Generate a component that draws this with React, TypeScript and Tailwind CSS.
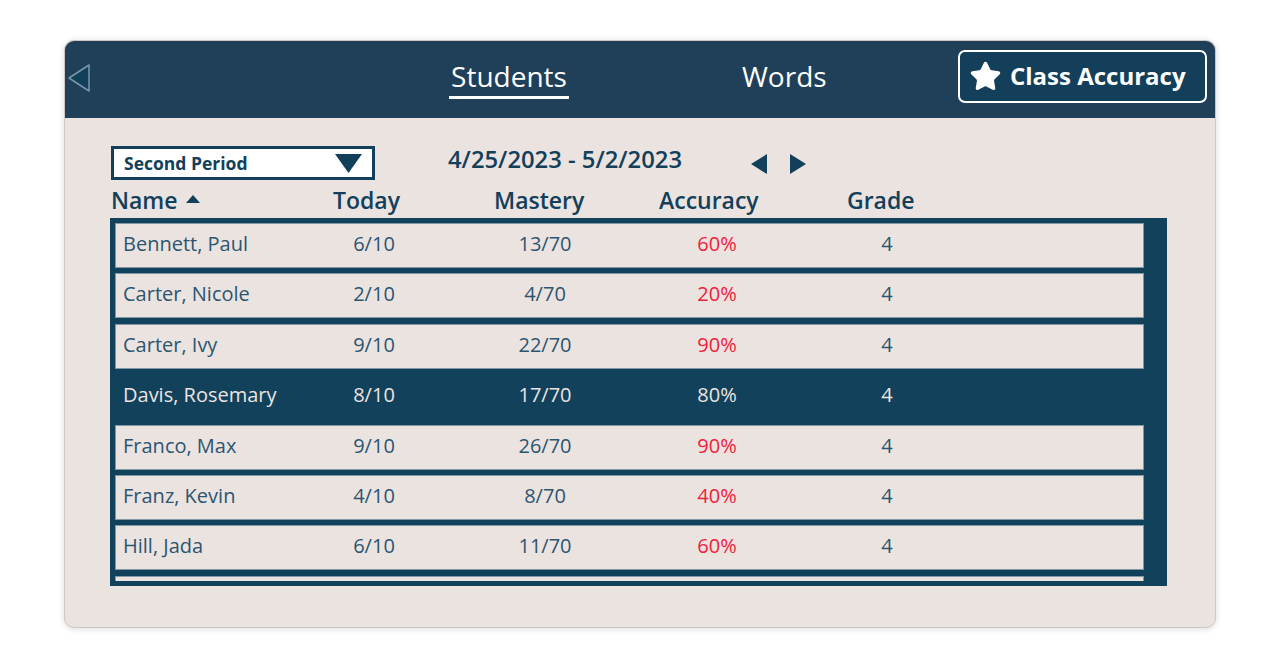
import { Star } from 'lucide-react'

type Row = {
  name: string
  today: string
  mastery: string
  accuracy: string
  grade: string
  selected?: boolean
}

const rows: Row[] = [
  { name: 'Bennett, Paul', today: '6/10', mastery: '13/70', accuracy: '60%', grade: '4' },
  { name: 'Carter, Nicole', today: '2/10', mastery: '4/70', accuracy: '20%', grade: '4' },
  { name: 'Carter, Ivy', today: '9/10', mastery: '22/70', accuracy: '90%', grade: '4' },
  { name: 'Davis, Rosemary', today: '8/10', mastery: '17/70', accuracy: '80%', grade: '4', selected: true },
  { name: 'Franco, Max', today: '9/10', mastery: '26/70', accuracy: '90%', grade: '4' },
  { name: 'Franz, Kevin', today: '4/10', mastery: '8/70', accuracy: '40%', grade: '4' },
  { name: 'Hill, Jada', today: '6/10', mastery: '11/70', accuracy: '60%', grade: '4' },
]

function StudentRow({ r }: { r: Row }) {
  const base = r.selected
    ? 'bg-[#12415b] text-[#ece4e1] px-px'
    : 'bg-[#ebe3e0] text-[#2c5570] border border-[#8197a4]'
  return (
    <div className={`flex h-[45px] shrink-0 items-center pb-[3px] text-[20px] ${base}`}>
      <div className="w-[200px] pl-[7px]">{r.name}</div>
      <div className="w-[116px] text-center">{r.today}</div>
      <div className="w-[226px] text-center">{r.mastery}</div>
      <div className={`w-[118px] text-center ${r.selected ? '' : 'text-[#f0213a]'}`}>{r.accuracy}</div>
      <div className="w-[222px] text-center">{r.grade}</div>
    </div>
  )
}

export default function App() {
  return (
    <div className="min-h-[668px] bg-white pl-[64px] pt-[40px]" style={{ fontFamily: '"Open Sans", sans-serif' }}>
      <div className="h-[588px] w-[1152px] overflow-hidden rounded-[10px] border border-[#cdc6c3] bg-[#ebe3e0] shadow-[0_1px_6px_rgba(0,0,0,0.15)]">
        {/* Header */}
        <div className="flex h-[77px] items-center bg-[#203f58] text-white">
          <svg width="24" height="30" viewBox="0 0 24 30" className="ml-[2px] mb-[3px]">
            <polygon points="2,15 22,2 22,28" fill="#12405a" stroke="#7896aa" strokeWidth="1.5" strokeLinejoin="round" />
          </svg>
          <div className="ml-[358px] flex flex-col items-center pb-[2px]">
            <span className="text-[28px] leading-[34px]">Students</span>
            <span className="mt-[3px] h-[3px] w-[120px] bg-white" />
          </div>
          <div className="ml-[173px] pb-[8px] text-[28px] leading-[34px]">Words</div>
          <button className="mb-[7px] ml-auto mr-[8px] flex h-[53px] w-[249px] items-center rounded-[7px] border-2 border-white bg-[#133f5a] pl-[9px]">
            <Star size={33} fill="white" strokeWidth={1.5} strokeLinejoin="round" className="text-white" />
            <span className="ml-[8px] text-[24px] font-bold">Class Accuracy</span>
          </button>
        </div>

        {/* Content */}
        <div className="pl-[45px] pt-[28px]">
          <div className="flex h-[34px] items-center">
            <div className="ml-px flex h-[34px] w-[264px] items-center justify-between border-[3px] border-[#12405a] bg-white pl-[10px] pr-[10px]">
              <span className="text-[17.5px] font-bold text-[#12405a]">Second Period</span>
              <svg width="27" height="19" viewBox="0 0 27 19">
                <polygon points="0,0 27,0 13.5,19" fill="#12405a" />
              </svg>
            </div>
            <span className="-mt-[7px] ml-[73px] text-[23.8px] font-semibold text-[#12405a]">4/25/2023 - 5/2/2023</span>
            <svg width="16" height="20" viewBox="0 0 16 20" className="ml-[69px] mt-[2px]">
              <polygon points="0,10 16,0 16,20" fill="#12405a" />
            </svg>
            <svg width="16" height="20" viewBox="0 0 16 20" className="ml-[23px] mt-[2px]">
              <polygon points="0,0 16,10 0,20" fill="#12405a" />
            </svg>
          </div>

          <div className="mt-[4px] flex h-[33px] items-center text-[23px] font-semibold text-[#12405a]">
            <div className="ml-px flex w-[222px] items-center">
              <span>Name</span>
              <svg width="14" height="8" viewBox="0 0 14 8" className="ml-[8px] -mt-[4px]">
                <polygon points="7,0 14,8 0,8" fill="#12405a" />
              </svg>
            </div>
            <div className="w-[161px]">Today</div>
            <div className="w-[165px]">Mastery</div>
            <div className="w-[188px]">Accuracy</div>
            <div>Grade</div>
          </div>

          <div className="mt-px h-[368px] w-[1057px] bg-[#12415b] pb-[5px] pl-[5px] pr-[23px] pt-[5px]">
            <div className="flex h-[358px] flex-col gap-[5.4px] overflow-hidden">
              {rows.map((r) => (
                <StudentRow key={r.name} r={r} />
              ))}
              <div className="h-[45px] shrink-0 border border-[#8197a4] bg-[#ebe3e0]" />
            </div>
          </div>
        </div>
      </div>
    </div>
  )
}
